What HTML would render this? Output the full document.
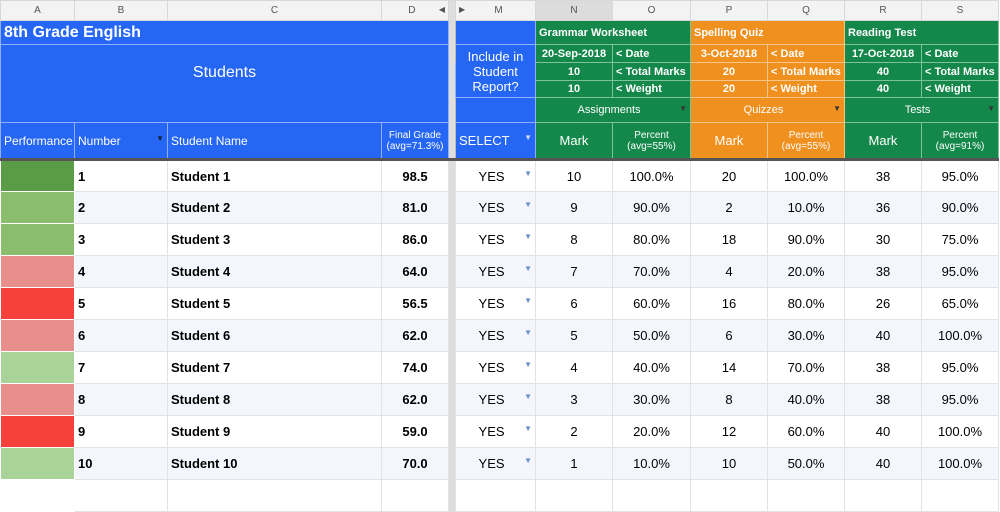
<!DOCTYPE html>
<html><head><meta charset="utf-8"><style>
*{margin:0;padding:0;box-sizing:border-box}
body{width:1000px;height:484px;overflow:hidden;background:#fff;font-family:"Liberation Sans",Arial,sans-serif}
table{border-collapse:collapse;table-layout:fixed;width:998px}
td{overflow:hidden;white-space:nowrap;padding:0 3px;font-size:12px}
.ch td{background:#f3f3f3;color:#555;font-size:10px;text-align:center;border:1px solid #d8d8d8;height:20px}
.ch td.sel{background:#dcdcdc}
.b{background:#2566f5;color:#fff;border:1px solid #8fb0ff}
.g{background:#14884a;color:#fff;border:1px solid #7cc39a;font-weight:bold;font-size:11px}
.o{background:#f0901e;color:#fff;border:1px solid #f7c58a;font-weight:bold;font-size:11px}
.gap{background:#dedede !important;border-left:1px solid #bbb;border-right:1px solid #bbb;padding:0}
.c{text-align:center}
.nb{font-weight:normal}
.sm{font-size:10px;line-height:11px;font-weight:normal;text-align:center;white-space:normal}
.hd td{border-bottom:3px solid #555}
.d td{height:32px;border:1px solid #e3e3e3;font-size:13px}
.d td.gap{border-top:none;border-bottom:none}
.d.alt td{background:#f3f7fd}
.d td.p{border:1px solid #fff}
.d .k{font-weight:bold}
.d .L{border-left:1.5px solid #555}
.arr{float:right;color:#6a8fc8;font-size:8px}
.warr{float:right;font-size:8px;color:#333}
</style></head><body>
<table>
<colgroup><col style="width:74px"><col style="width:93px"><col style="width:214px"><col style="width:67px"><col style="width:7px"><col style="width:80px"><col style="width:77px"><col style="width:78px"><col style="width:77px"><col style="width:77px"><col style="width:77px"><col style="width:77px"></colgroup>
<tr class="ch"><td>A</td><td>B</td><td>C</td><td>D <span style="float:right;font-size:8px">◀</span></td><td class="gap"></td><td><span style="float:left;font-size:8px">▶</span>M</td><td class="sel">N</td><td>O</td><td>P</td><td>Q</td><td>R</td><td>S</td></tr>
<tr style="height:24px"><td class="b" colspan="4" style="font-size:16px;font-weight:bold">8th Grade English</td><td class="gap"></td><td class="b"></td><td class="g" colspan="2">Grammar Worksheet</td><td class="o" colspan="2">Spelling Quiz</td><td class="g" colspan="2">Reading Test</td></tr>
<tr style="height:18px"><td class="b c" colspan="4" rowspan="4" style="font-size:16px;padding-bottom:22px">Students</td><td class="gap"></td><td class="b c" rowspan="3" style="font-size:13px;white-space:normal;line-height:15px">Include in Student Report?</td><td class="g c">20-Sep-2018</td><td class="g">&lt; Date</td><td class="o c">3-Oct-2018</td><td class="o">&lt; Date</td><td class="g c">17-Oct-2018</td><td class="g">&lt; Date</td></tr>
<tr style="height:18px"><td class="gap"></td><td class="g c">10</td><td class="g">&lt; Total Marks</td><td class="o c">20</td><td class="o">&lt; Total Marks</td><td class="g c">40</td><td class="g">&lt; Total Marks</td></tr>
<tr style="height:17px"><td class="gap"></td><td class="g c">10</td><td class="g">&lt; Weight</td><td class="o c">20</td><td class="o">&lt; Weight</td><td class="g c">40</td><td class="g">&lt; Weight</td></tr>
<tr style="height:25px"><td class="gap"></td><td class="b"></td><td class="g c nb" colspan="2">Assignments<span class="warr">▼</span></td><td class="o c nb" colspan="2">Quizzes<span class="warr">▼</span></td><td class="g c nb" colspan="2">Tests<span class="warr">▼</span></td></tr>
<tr class="hd" style="height:37px"><td class="b">Performance</td><td class="b">Number<span class="warr" style="color:#123">▼</span></td><td class="b">Student Name</td><td class="b sm">Final Grade (avg=71.3%)</td><td class="gap"></td><td class="b" style="font-size:13px">SELECT<span class="warr" style="color:#cde">▼</span></td><td class="g c nb" style="font-size:13px">Mark</td><td class="g sm">Percent (avg=55%)</td><td class="o c nb" style="font-size:13px">Mark</td><td class="o sm">Percent (avg=55%)</td><td class="g c nb" style="font-size:13px">Mark</td><td class="g sm">Percent (avg=91%)</td></tr>
<tr class="d"><td class="p" style="background:#5a9c46"></td><td class="k">1</td><td class="k">Student 1</td><td class="k c">98.5</td><td class="gap"></td><td class="c">YES<span class="arr">▼</span></td><td class="c L">10</td><td class="c">100.0%</td><td class="c L">20</td><td class="c">100.0%</td><td class="c L">38</td><td class="c">95.0%</td></tr>
<tr class="d alt"><td class="p" style="background:#8abd6e"></td><td class="k">2</td><td class="k">Student 2</td><td class="k c">81.0</td><td class="gap"></td><td class="c">YES<span class="arr">▼</span></td><td class="c L">9</td><td class="c">90.0%</td><td class="c L">2</td><td class="c">10.0%</td><td class="c L">36</td><td class="c">90.0%</td></tr>
<tr class="d"><td class="p" style="background:#8abd6e"></td><td class="k">3</td><td class="k">Student 3</td><td class="k c">86.0</td><td class="gap"></td><td class="c">YES<span class="arr">▼</span></td><td class="c L">8</td><td class="c">80.0%</td><td class="c L">18</td><td class="c">90.0%</td><td class="c L">30</td><td class="c">75.0%</td></tr>
<tr class="d alt"><td class="p" style="background:#e88e8c"></td><td class="k">4</td><td class="k">Student 4</td><td class="k c">64.0</td><td class="gap"></td><td class="c">YES<span class="arr">▼</span></td><td class="c L">7</td><td class="c">70.0%</td><td class="c L">4</td><td class="c">20.0%</td><td class="c L">38</td><td class="c">95.0%</td></tr>
<tr class="d"><td class="p" style="background:#f5413a"></td><td class="k">5</td><td class="k">Student 5</td><td class="k c">56.5</td><td class="gap"></td><td class="c">YES<span class="arr">▼</span></td><td class="c L">6</td><td class="c">60.0%</td><td class="c L">16</td><td class="c">80.0%</td><td class="c L">26</td><td class="c">65.0%</td></tr>
<tr class="d alt"><td class="p" style="background:#e88e8c"></td><td class="k">6</td><td class="k">Student 6</td><td class="k c">62.0</td><td class="gap"></td><td class="c">YES<span class="arr">▼</span></td><td class="c L">5</td><td class="c">50.0%</td><td class="c L">6</td><td class="c">30.0%</td><td class="c L">40</td><td class="c">100.0%</td></tr>
<tr class="d"><td class="p" style="background:#a8d399"></td><td class="k">7</td><td class="k">Student 7</td><td class="k c">74.0</td><td class="gap"></td><td class="c">YES<span class="arr">▼</span></td><td class="c L">4</td><td class="c">40.0%</td><td class="c L">14</td><td class="c">70.0%</td><td class="c L">38</td><td class="c">95.0%</td></tr>
<tr class="d alt"><td class="p" style="background:#e88e8c"></td><td class="k">8</td><td class="k">Student 8</td><td class="k c">62.0</td><td class="gap"></td><td class="c">YES<span class="arr">▼</span></td><td class="c L">3</td><td class="c">30.0%</td><td class="c L">8</td><td class="c">40.0%</td><td class="c L">38</td><td class="c">95.0%</td></tr>
<tr class="d"><td class="p" style="background:#f5413a"></td><td class="k">9</td><td class="k">Student 9</td><td class="k c">59.0</td><td class="gap"></td><td class="c">YES<span class="arr">▼</span></td><td class="c L">2</td><td class="c">20.0%</td><td class="c L">12</td><td class="c">60.0%</td><td class="c L">40</td><td class="c">100.0%</td></tr>
<tr class="d alt"><td class="p" style="background:#a8d399"></td><td class="k">10</td><td class="k">Student 10</td><td class="k c">70.0</td><td class="gap"></td><td class="c">YES<span class="arr">▼</span></td><td class="c L">1</td><td class="c">10.0%</td><td class="c L">10</td><td class="c">50.0%</td><td class="c L">40</td><td class="c">100.0%</td></tr>
<tr class="d"><td class="p"></td><td></td><td></td><td></td><td class="gap"></td><td></td><td class="L"></td><td></td><td class="L"></td><td></td><td class="L"></td><td></td></tr>
</table>
</body></html>
